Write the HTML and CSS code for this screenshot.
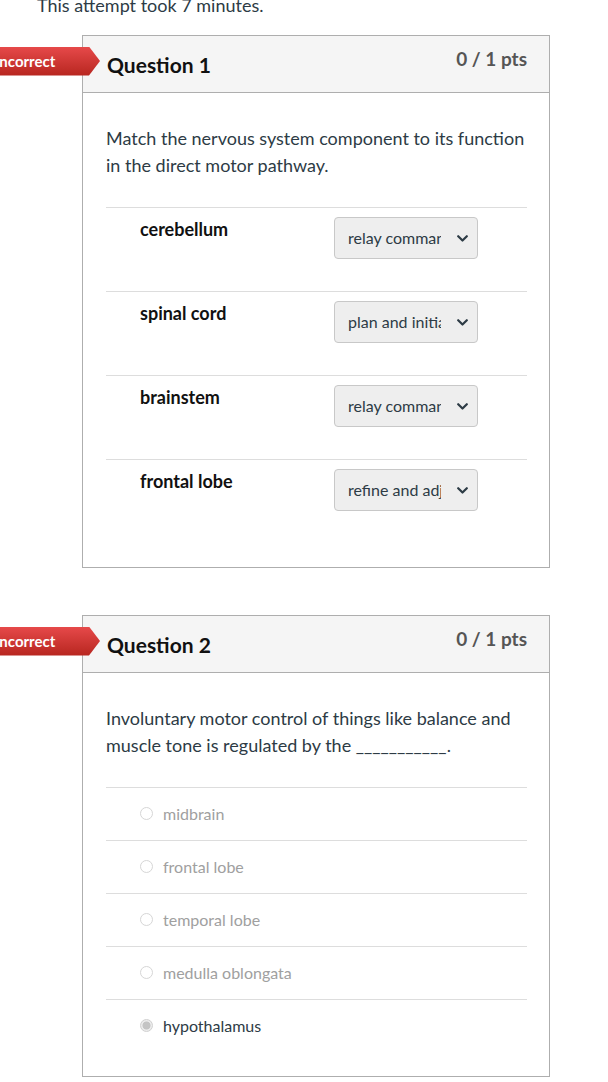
FILE: index.html
```html
<!DOCTYPE html>
<html lang="en">
<head>
<meta charset="utf-8">
<title>Quiz results</title>
<link rel="stylesheet" href="styles.css">
</head>
<body>
<p class="summary">This attempt took 7 minutes.</p>

<section class="question">
  <div class="badge">Incorrect</div>
  <header class="q-header">
    <h2 class="q-title">Question 1</h2>
    <span class="q-pts">0 / 1 pts</span>
  </header>
  <div class="q-body">
    <p class="q-text">Match the nervous system component to its function in the direct motor pathway.</p>
    <div class="match-row">
      <span class="match-label">cerebellum</span>
      <span class="select-wrap">
        <select class="match-select"><option>relay commands</option></select>
        <svg class="chev" width="11" height="7" viewBox="0 0 11 7"><path d="M1.2 1.2 L5.5 5.5 L9.8 1.2" fill="none" stroke="#2d3b45" stroke-width="2.2" stroke-linecap="round" stroke-linejoin="round"/></svg>
      </span>
    </div>
    <div class="match-row">
      <span class="match-label">spinal cord</span>
      <span class="select-wrap">
        <select class="match-select"><option>plan and initiate</option></select>
        <svg class="chev" width="11" height="7" viewBox="0 0 11 7"><path d="M1.2 1.2 L5.5 5.5 L9.8 1.2" fill="none" stroke="#2d3b45" stroke-width="2.2" stroke-linecap="round" stroke-linejoin="round"/></svg>
      </span>
    </div>
    <div class="match-row">
      <span class="match-label">brainstem</span>
      <span class="select-wrap">
        <select class="match-select"><option>relay commands</option></select>
        <svg class="chev" width="11" height="7" viewBox="0 0 11 7"><path d="M1.2 1.2 L5.5 5.5 L9.8 1.2" fill="none" stroke="#2d3b45" stroke-width="2.2" stroke-linecap="round" stroke-linejoin="round"/></svg>
      </span>
    </div>
    <div class="match-row">
      <span class="match-label">frontal lobe</span>
      <span class="select-wrap">
        <select class="match-select"><option>refine and adjust</option></select>
        <svg class="chev" width="11" height="7" viewBox="0 0 11 7"><path d="M1.2 1.2 L5.5 5.5 L9.8 1.2" fill="none" stroke="#2d3b45" stroke-width="2.2" stroke-linecap="round" stroke-linejoin="round"/></svg>
      </span>
    </div>
  </div>
</section>

<section class="question">
  <div class="badge">Incorrect</div>
  <header class="q-header">
    <h2 class="q-title">Question 2</h2>
    <span class="q-pts">0 / 1 pts</span>
  </header>
  <div class="q-body">
    <p class="q-text">Involuntary motor control of things like balance and muscle tone is regulated by the ___________.</p>
    <ul class="answers">
      <li class="answer"><span class="radio"></span><span class="answer-text">midbrain</span></li>
      <li class="answer"><span class="radio"></span><span class="answer-text">frontal lobe</span></li>
      <li class="answer"><span class="radio"></span><span class="answer-text">temporal lobe</span></li>
      <li class="answer"><span class="radio"></span><span class="answer-text">medulla oblongata</span></li>
      <li class="answer selected"><span class="radio"></span><span class="answer-text">hypothalamus</span></li>
    </ul>
  </div>
</section>
</body>
</html>
```

FILE: styles.css
```css
html, body {
  margin: 0;
  padding: 0;
  background: #ffffff;
}

body {
  font-family: Lato, "Open Sans", "Liberation Sans", sans-serif;
  color: #2d3b45;
  overflow: hidden;
}

.summary {
  margin: -5px 0 18px 37px;
  font-size: 18px;
  line-height: 1.2;
}

.question {
  position: relative;
  box-sizing: border-box;
  width: 468px;
  margin: 0 0 47px 82px;
  border: 1px solid #aeaeae;
  background: #ffffff;
}

.badge {
  position: absolute;
  top: 11px;
  left: -92px;
  box-sizing: border-box;
  width: 109px;
  height: 29px;
  padding-left: 4px;
  font-size: 15px;
  font-weight: 700;
  line-height: 29px;
  color: #ffffff;
  background: linear-gradient(#e6494a, #b7261f);
  clip-path: polygon(0 0, calc(100% - 11px) 0, 100% 50%, calc(100% - 11px) 100%, 0 100%);
  z-index: 2;
}

.q-header {
  display: flex;
  justify-content: space-between;
  align-items: flex-start;
  height: 56px;
  padding: 0 22px 0 24px;
  background: #f5f5f5;
  border-bottom: 1px solid #aeaeae;
}

.q-title {
  margin: 16px 0 0;
  font-size: 21px;
  font-weight: 700;
  line-height: 1.2;
  color: #111111;
}

.q-pts {
  margin-top: 12px;
  font-size: 19px;
  font-weight: 700;
  line-height: 1.2;
  color: #555555;
}

.q-body {
  padding: 32px 22px 24px 23px;
}

.q-text {
  margin: 0 0 28px;
  font-size: 18px;
  line-height: 27px;
}

.match-row {
  display: flex;
  align-items: flex-start;
  box-sizing: border-box;
  height: 84px;
  padding-top: 9px;
  border-top: 1px solid #dddddd;
}

.match-label {
  box-sizing: border-box;
  width: 228px;
  padding: 2px 0 0 34px;
  font-size: 18px;
  font-weight: 700;
  line-height: 1.2;
  color: #111111;
}

.select-wrap {
  position: relative;
  display: block;
  width: 144px;
  height: 42px;
}

.match-select {
  appearance: none;
  -webkit-appearance: none;
  box-sizing: border-box;
  width: 144px;
  height: 42px;
  margin: 0;
  padding: 0 36px 0 13px;
  border: 1px solid #c8c8c8;
  border-radius: 4px;
  background: #eeeeee;
  font-family: Lato, "Open Sans", "Liberation Sans", sans-serif;
  font-size: 16px;
  color: #2d3b45;
}

.chev {
  position: absolute;
  top: 18px;
  left: 123px;
  pointer-events: none;
}

.answers {
  list-style: none;
  margin: 0;
  padding: 0;
}

.answer {
  display: flex;
  align-items: center;
  height: 52px;
  border-top: 1px solid #dddddd;
  padding-left: 34px;
}

.radio {
  box-sizing: border-box;
  width: 13px;
  height: 13px;
  margin-right: 10px;
  border: 1px solid #d6d6d6;
  border-radius: 50%;
  background: #ffffff;
}

.answer.selected .radio {
  border-color: #d0d0d0;
  background: radial-gradient(circle, #c4c4c4 0 3.6px, #ececec 4.4px);
}

.answer-text {
  font-size: 16px;
  line-height: 1.2;
  color: #a0a0a0;
}

.answer.selected .answer-text {
  color: #2d3b45;
}
```
